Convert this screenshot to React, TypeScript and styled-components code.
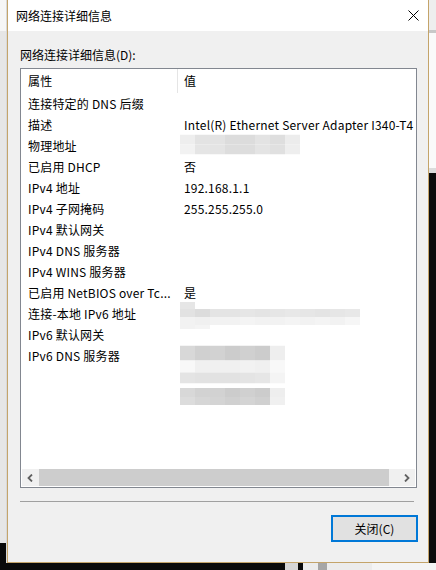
import React from 'react'
import styled, { createGlobalStyle } from 'styled-components'

const Global = createGlobalStyle`
  html, body {
    margin: 0;
    padding: 0;
    background: #0c0c0c;
    overflow: hidden;
  }
  body {
    font-family: "Noto Sans CJK SC", "Noto Sans", sans-serif;
    color: #000;
  }
`

const Screen = styled.div`
  display: grid;
  grid-template-columns: 7px 422px 7px;
  grid-template-rows: 563px 7px;
  width: 436px;
  height: 570px;
`

const LeftEdge = styled.div`
  background: linear-gradient(to bottom, #f6f6f6 0 31px, #e6e6e6 31px 543px, #0a0a0a 543px);
  box-shadow: inset -1px 0 0 #d8d8d8;
`

const RightEdge = styled.div`
  background: linear-gradient(
    to bottom,
    #eeeeee 0 30px,
    #c8c8c8 30px 33px,
    #fafafa 33px 168px,
    #dcdcdc 168px 173px,
    #0c0c0c 173px
  );
`

const BottomEdge = styled.div`
  grid-column: 1 / -1;
  background: linear-gradient(
    to right,
    #0a0a0a 0 285px,
    #d6d6d6 285px 298px,
    #0a0a0a 298px 303px,
    #ececec 303px 318px,
    #a6a6a6 318px 327px,
    #ececec 327px 372px,
    #f4f4f4 372px
  );
`

const Dialog = styled.section`
  display: flex;
  flex-direction: column;
  min-height: 0;
  background: #f0f0f0;
  border: 1px solid #c4a46a;
  border-top: none;
`

const TitleBar = styled.header`
  display: flex;
  align-items: center;
  justify-content: space-between;
  height: 31px;
  padding: 0 9px 0 8px;
  background: #fff;
  font-size: 12px;
  line-height: 16px;
`

const Body = styled.div`
  display: flex;
  flex-direction: column;
  flex: 1;
  padding: 16px 11px 20px 12px;
  font-size: 12px;
  line-height: 16px;
`

const Label = styled.div`
  margin-bottom: 5px;
`

const ListBox = styled.div`
  display: flex;
  flex-direction: column;
  box-sizing: border-box;
  height: 420px;
  background: #fff;
  border: 1px solid #828790;
  overflow: hidden;
  letter-spacing: 0.2px;
`

const HeaderRow = styled.div`
  display: grid;
  grid-template-columns: 157px 1fr;
  height: 24px;
  flex: none;
`

const HeaderCell = styled.div<{ $divider?: boolean }>`
  display: flex;
  align-items: center;
  padding-left: ${(p) => (p.$divider ? 7 : 6)}px;
  border-right: ${(p) => (p.$divider ? '1px solid #e5e5e5' : 'none')};
`

const Rows = styled.div`
  flex: 1;
  overflow: hidden;
`

const Row = styled.div`
  display: grid;
  grid-template-columns: 157px 1fr;
  grid-template-rows: 21px;
  height: 21px;
`

const Cell = styled.div<{ $first?: boolean }>`
  display: flex;
  align-items: center;
  height: 21px;
  padding-left: ${(p) => (p.$first ? 7 : 6)}px;
  white-space: nowrap;
  min-width: 0;
  min-height: 0;
`

const Scrollbar = styled.div`
  display: flex;
  height: 17px;
  margin: 0 1px 1px;
  background: #f0f0f0;
  flex: none;
`

const Arrow = styled.div`
  display: flex;
  align-items: center;
  justify-content: center;
  width: 17px;
`

const Track = styled.div`
  flex: 1;
  display: flex;
`

const Thumb = styled.div`
  width: 350px;
  background: #cdcdcd;
`

const Separator = styled.div`
  height: 1px;
  margin: 13px 3px 0 0;
  background: #a0a0a0;
`

const Footer = styled.div`
  display: flex;
  justify-content: flex-end;
  margin: 13px -1px 0 0;
`

const Button = styled.button`
  box-sizing: border-box;
  width: 87px;
  height: 27px;
  padding: 0;
  background: #e1e1e1;
  border: 2px solid #0078d7;
  font: inherit;
  color: #000;
`

const MosaicSvg = styled.svg<{ $dy: number }>`
  display: block;
  flex: none;
  margin-left: -4px;
  transform: translateY(${(p) => p.$dy}px);
`

type Band = { h: number; tones: (number | null)[] }

function Mosaic({ bands, dy }: { bands: Band[]; dy: number }) {
  const cols = Math.max(...bands.map((b) => b.tones.length))
  const height = bands.reduce((s, b) => s + b.h, 0)
  let y = 0
  const rects: React.ReactNode[] = []
  bands.forEach((b, bi) => {
    b.tones.forEach((t, i) => {
      if (t == null) return
      rects.push(
        <rect key={`${bi}-${i}`} x={i * 15} y={y} width={15} height={b.h} fill={`rgb(${t},${t},${t})`} />
      )
    })
    y += b.h
  })
  return (
    <MosaicSvg $dy={dy} width={cols * 15} height={height} viewBox={`0 0 ${cols * 15} ${height}`}>
      {rects}
    </MosaicSvg>
  )
}

const macBlur: Band[] = [
  { h: 10, tones: [0xee, 0xe3, 0xe3, 0xdc, 0xdc, 0xe3, 0xde, 0xec] },
  { h: 10, tones: [0xf2, 0xe5, 0xe4, 0xdd, 0xdd, 0xe4, 0xe0, 0xee] },
]

const linkLocalBlur: Band[] = [
  { h: 7, tones: [0xe6, null] },
  { h: 8, tones: [0xe2, 0xdc, 0xe4, 0xe4, 0xe6, 0xe4, 0xe6, 0xe8, 0xe6, 0xe4, 0xe6, 0xe8] },
  { h: 8, tones: [0xf2, 0xf0, 0xf2, 0xf2, 0xf4, 0xf2, 0xf2, 0xf4, 0xf2, 0xf4, 0xf2, 0xf6] },
  { h: 4, tones: [0xf2, 0xf4] },
]

const dnsBlurA: Band[] = [
  { h: 15, tones: [0xd8, 0xd0, 0xd2, 0xcc, 0xd0, 0xcc, 0xee] },
  { h: 12, tones: [0xf8, 0xf0, 0xf0, 0xf0, 0xf2, 0xf0, 0xf8] },
  { h: 11, tones: [0xe4, 0xe2, 0xe2, 0xe2, 0xe4, 0xe6, 0xf4] },
]

const dnsBlurB: Band[] = [
  { h: 9, tones: [0xd8, 0xd2, 0xd2, 0xcc, 0xd0, 0xcc, 0xee] },
  { h: 8, tones: [0xdc, 0xd6, 0xd4, 0xd0, 0xd4, 0xd0, 0xf0] },
]

const details: { name: string; value: React.ReactNode }[] = [
  { name: '连接特定的 DNS 后缀', value: '' },
  { name: '描述', value: 'Intel(R) Ethernet Server Adapter I340-T4' },
  { name: '物理地址', value: <Mosaic bands={macBlur} dy={-1.5} /> },
  { name: '已启用 DHCP', value: '否' },
  { name: 'IPv4 地址', value: '192.168.1.1' },
  { name: 'IPv4 子网掩码', value: '255.255.255.0' },
  { name: 'IPv4 默认网关', value: '' },
  { name: 'IPv4 DNS 服务器', value: '' },
  { name: 'IPv4 WINS 服务器', value: '' },
  { name: '已启用 NetBIOS over Tc...', value: '是' },
  { name: '连接-本地 IPv6 地址', value: <Mosaic bands={linkLocalBlur} dy={2} /> },
  { name: 'IPv6 默认网关', value: '' },
  { name: 'IPv6 DNS 服务器', value: <Mosaic bands={dnsBlurA} dy={8.5} /> },
  { name: '', value: '' },
  { name: '', value: <Mosaic bands={dnsBlurB} dy={-1} /> },
]

function CloseIcon() {
  return (
    <svg width="11" height="11" viewBox="0 0 11 11">
      <path d="M0.5 0.5 L10.5 10.5 M10.5 0.5 L0.5 10.5" stroke="#000" strokeWidth="1" fill="none" />
    </svg>
  )
}

function Chevron({ dir }: { dir: 'left' | 'right' }) {
  return (
    <svg width="7" height="8" viewBox="0 0 7 8">
      <path
        d={dir === 'left' ? 'M5 0.5 L1.5 4 L5 7.5' : 'M2 0.5 L5.5 4 L2 7.5'}
        stroke="#606060"
        strokeWidth="1.8"
        fill="none"
      />
    </svg>
  )
}

export default function App() {
  return (
    <>
      <Global />
      <Screen>
        <LeftEdge />
        <Dialog>
          <TitleBar>
            <span>网络连接详细信息</span>
            <CloseIcon />
          </TitleBar>
          <Body>
            <Label>网络连接详细信息(D):</Label>
            <ListBox>
              <HeaderRow>
                <HeaderCell $divider>属性</HeaderCell>
                <HeaderCell>值</HeaderCell>
              </HeaderRow>
              <Rows>
                {details.map((d, i) => (
                  <Row key={i}>
                    <Cell $first>{d.name}</Cell>
                    <Cell>{d.value}</Cell>
                  </Row>
                ))}
              </Rows>
              <Scrollbar>
                <Arrow>
                  <Chevron dir="left" />
                </Arrow>
                <Track>
                  <Thumb />
                </Track>
                <Arrow>
                  <Chevron dir="right" />
                </Arrow>
              </Scrollbar>
            </ListBox>
            <Separator />
            <Footer>
              <Button>关闭(C)</Button>
            </Footer>
          </Body>
        </Dialog>
        <RightEdge />
        <BottomEdge />
      </Screen>
    </>
  )
}
